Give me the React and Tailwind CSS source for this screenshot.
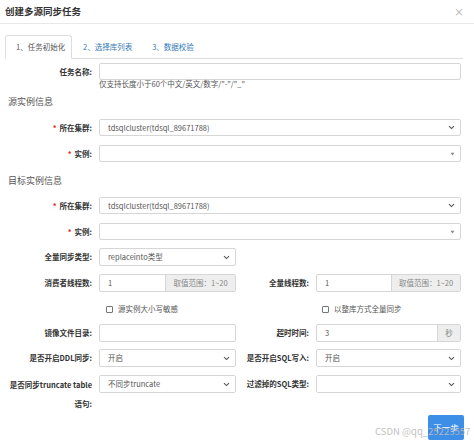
import React from "react";

const Chevron = () => (
  <svg width="7" height="5" viewBox="0 0 7 5" className="shrink-0">
    <path d="M1 1.2 L3.5 3.6 L6 1.2" fill="none" stroke="#555" strokeWidth="1.1" />
  </svg>
);

const Tri = () => (
  <svg width="5" height="4" viewBox="0 0 5 4" className="shrink-0">
    <path d="M0.5 0.8 L4.5 0.8 L2.5 3.4 Z" fill="#888" />
  </svg>
);

const Label = ({ children, w = "w-[92px]", req }) => (
  <div className={`${w} shrink-0 text-right text-[7.5px] font-bold text-[#333] leading-[10px]`}>
    {req && <span className="text-[#e02020] mr-[3px]">*</span>}
    {children}
  </div>
);

const Select = ({ value, w, h = "h-[17px]", tri }) => (
  <div className={`${w} ${h} ml-[7px] border border-[#d6d6d6] rounded-[2px] bg-white flex items-center justify-between pl-[8px] pr-[5px]`}>
    <span className="text-[7.5px] text-[#555]">{value}</span>
    {tri ? <Tri /> : <Chevron />}
  </div>
);

const Input = ({ value, w, addon, addonW }) => (
  <div className={`${w} h-[18px] ml-[7px] border border-[#d6d6d6] rounded-[2px] bg-white flex`}>
    <div className="flex-1 flex items-center pl-[8px] text-[7.5px] text-[#555]">{value}</div>
    {addon && (
      <div className={`${addonW} border-l border-[#d6d6d6] bg-[#eeeeee] flex items-center justify-center text-[7.5px] text-[#888]`}>
        {addon}
      </div>
    )}
  </div>
);

const Checkbox = ({ label }) => (
  <div className="flex items-center">
    <div className="w-[7px] h-[7px] border border-[#777] rounded-[1px] bg-white" />
    <span className="ml-[5px] text-[7.5px] text-[#555]">{label}</span>
  </div>
);

export default function App() {
  return (
    <div className="relative w-[474px] h-[440px] overflow-hidden bg-white font-['Noto_Sans_CJK_SC','Noto_Sans',sans-serif]">
      {/* header */}
      <div className="h-[24px] border-b border-[#e8e8e8] flex items-center justify-between pl-[5px] pr-[10px]">
        <span className="text-[9.5px] font-bold text-[#333]">创建多源同步任务</span>
        <span className="text-[10px] text-[#aaa] leading-none">×</span>
      </div>

      {/* tabs */}
      <div className="mt-[11px] ml-[5px] w-[458px] h-[24px] border-b border-[#dddddd] flex items-end">
        <div className="w-[67px] h-[24px] -mb-px border border-[#dddddd] border-b-white rounded-t-[3px] bg-white flex items-center pl-[10px] text-[7.5px] text-[#555]">
          1、任务初始化
        </div>
        <div className="h-[23px] flex items-center pl-[11px] text-[7.5px] text-[#337ab7]">2、选择库列表</div>
        <div className="h-[23px] flex items-center pl-[20px] text-[7.5px] text-[#337ab7]">3、数据校验</div>
      </div>

      {/* task name */}
      <div className="mt-[4px] flex items-center h-[17px]">
        <Label>任务名称:</Label>
        <div className="w-[362px] h-[17px] ml-[7px] border border-[#d6d6d6] rounded-[2px]" />
      </div>
      <div className="ml-[99px] text-[7.5px] leading-[8px] text-[#555]">仅支持长度小于60个中文/英文/数字/"-"/"_"</div>

      {/* source */}
      <div className="mt-[8px] ml-[8px] text-[9px] leading-[12px] text-[#555]">源实例信息</div>
      <div className="mt-[11px] flex items-center">
        <Label req>所在集群:</Label>
        <Select w="w-[362px]" value="tdsqlcluster(tdsql_89671788)" />
      </div>
      <div className="mt-[9px] flex items-center">
        <Label req>实例:</Label>
        <Select w="w-[362px]" value="" tri />
      </div>

      {/* target */}
      <div className="mt-[13px] ml-[8px] text-[9px] leading-[12px] text-[#555]">目标实例信息</div>
      <div className="mt-[10px] flex items-center">
        <Label req>所在集群:</Label>
        <Select w="w-[362px]" value="tdsqlcluster(tdsql_89671788)" />
      </div>
      <div className="mt-[9px] flex items-center">
        <Label req>实例:</Label>
        <Select w="w-[362px]" value="" tri />
      </div>

      <div className="mt-[8px] flex items-center">
        <Label>全量同步类型:</Label>
        <Select w="w-[137px]" h="h-[18px]" value="replaceinto类型" />
      </div>

      <div className="mt-[8px] flex items-center">
        <Label>消费者线程数:</Label>
        <Input w="w-[137px]" value="1" addon="取值范围：1~20" addonW="w-[70px]" />
        <Label w="w-[73px]">全量线程数:</Label>
        <Input w="w-[145px]" value="1" addon="取值范围：1~20" addonW="w-[69px]" />
      </div>

      <div className="mt-[12px] h-[10px] flex items-center">
        <div className="ml-[106px] w-[216px]">
          <Checkbox label="源实例大小写敏感" />
        </div>
        <Checkbox label="以整库方式全量同步" />
      </div>

      <div className="mt-[10px] flex items-center">
        <Label>镜像文件目录:</Label>
        <Input w="w-[137px]" value="" />
        <Label w="w-[73px]">超时时间:</Label>
        <Input w="w-[145px]" value="3" addon="秒" addonW="w-[23px]" />
      </div>

      <div className="mt-[7px] flex items-center">
        <Label>是否开启DDL同步:</Label>
        <Select w="w-[137px]" h="h-[18px]" value="开启" />
        <Label w="w-[73px]">是否开启SQL写入:</Label>
        <Select w="w-[145px]" h="h-[18px]" value="开启" />
      </div>

      <div className="mt-[8px] flex items-start">
        <div className="w-[92px] shrink-0 text-right text-[7.5px] font-bold text-[#333] leading-[19px]">
          <div className="whitespace-nowrap">是否同步truncate table</div>
          <div>语句:</div>
        </div>
        <Select w="w-[137px]" h="h-[18px]" value="不同步truncate" />
        <div className="w-[73px] shrink-0 text-right text-[7.5px] font-bold text-[#333] leading-[18px]">过滤掉的SQL类型:</div>
        <Select w="w-[145px]" h="h-[18px]" value="" />
      </div>

      <div className="mt-[2px] flex justify-end pr-[10px]">
        <div className="w-[36px] h-[25px] bg-[#3d8ee6] rounded-[2px] flex justify-center pt-[6px] text-[8.5px] text-white">
          下一步
        </div>
      </div>

      <div className="absolute left-[375px] top-[424px] text-[9.5px] text-[#bbbbbb] opacity-90 whitespace-nowrap">
        CSDN @qq_25223557
      </div>
    </div>
  );
}
